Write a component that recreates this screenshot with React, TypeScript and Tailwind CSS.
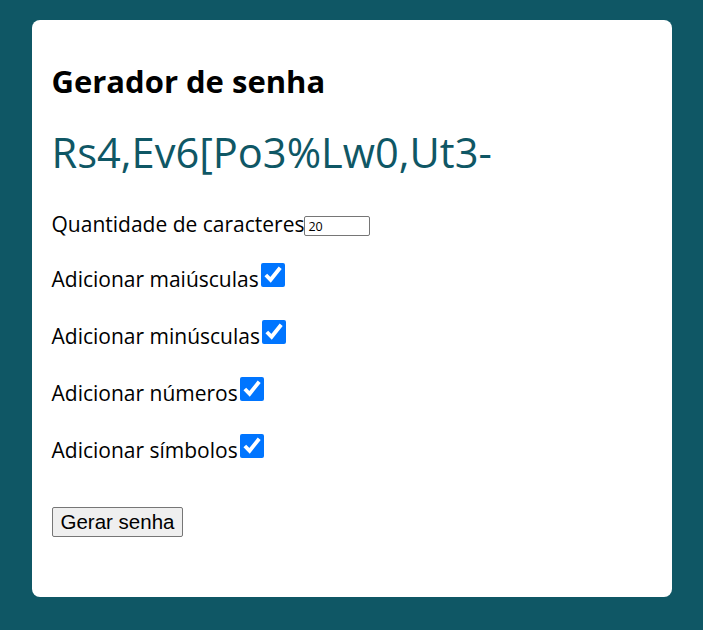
import { useState } from 'react';

const options = [
    { id: 'upper', label: 'Adicionar maiúsculas' },
    { id: 'lower', label: 'Adicionar minúsculas' },
    { id: 'numbers', label: 'Adicionar números' },
    { id: 'symbols', label: 'Adicionar símbolos' },
];

export default function App() {
    const [length, setLength] = useState('20');
    const [checked, setChecked] = useState<Record<string, boolean>>({
        upper: true,
        lower: true,
        numbers: true,
        symbols: true,
    });

    return (
        <div className="min-h-[630px] bg-[#0f5765] pt-5 pb-[33px] font-['Open_Sans',sans-serif]">
            <div className="mx-auto w-[640px] h-[577px] rounded-lg bg-white px-5 pt-[41px]">
                <h1 className="text-[31px] font-bold leading-[40px] text-black">Gerador de senha</h1>
                <p className="mt-[23px] text-[41.6px] leading-[56px] text-[#0f5765]">Rs4,Ev6[Po3%Lw0,Ut3-</p>

                <div className="mt-[30px] flex h-7 items-start text-[21px] leading-7 text-black">
                    <span>Quantidade de caracteres</span>
                    <input
                        type="number"
                        value={length}
                        onChange={(e) => setLength(e.target.value)}
                        className="mt-[6px] h-5 w-[66px] rounded-[2px] border border-[#767676] px-[3px] text-[12.5px] leading-none [appearance:textfield] [&::-webkit-inner-spin-button]:appearance-none"
                    />
                </div>

                <div className="mt-[27px] flex flex-col gap-[29px]">
                    {options.map((opt) => (
                        <label key={opt.id} className="flex h-7 items-start text-[21px] leading-7 text-black">
                            <span>{opt.label}</span>
                            <input
                                type="checkbox"
                                checked={checked[opt.id]}
                                onChange={() => setChecked({ ...checked, [opt.id]: !checked[opt.id] })}
                                className="-mt-0.5 ml-[2px] h-6 w-6"
                            />
                        </label>
                    ))}
                </div>

                <button
                    type="button"
                    className="mt-[43px] h-[30px] rounded-[2px] border border-[#767676] bg-[#efefef] px-[8px] font-['Liberation_Sans',Arial,sans-serif] text-[20.5px] leading-none text-black"
                >
                    Gerar senha
                </button>
            </div>
        </div>
    );
}
